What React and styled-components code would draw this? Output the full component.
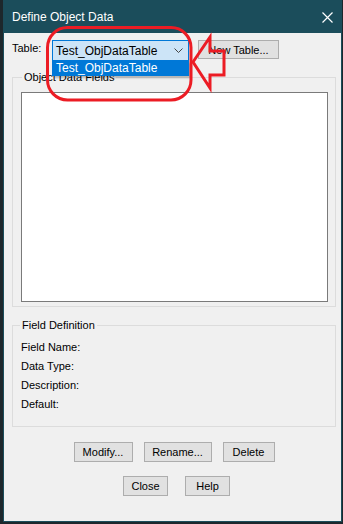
import React from 'react';
import styled, { createGlobalStyle } from 'styled-components';

const GlobalStyle = createGlobalStyle`
  html, body {
    margin: 0;
    padding: 0;
    background: #1d272c;
  }
  body {
    font-family: "Liberation Sans", Arial, sans-serif;
  }
`;

// Outer desktop area and the dialog window
const Screen = styled.div`
  position: relative;
  width: 343px;
  height: 524px;
  padding-left: 3px;
  box-sizing: border-box;
  background: #1d272c;
`;

const Window = styled.div`
  width: 339px;
  height: 522px;
  box-sizing: border-box;
  border: 1px solid #1b4d5b;
  background: #1b4d5b;
  display: flex;
  flex-direction: column;
`;

const TitleBar = styled.div`
  height: 32px;
  flex: none;
  display: flex;
  align-items: center;
  justify-content: space-between;
  padding: 0 8px;
  color: #fff;
  font-size: 12px;
`;

const Body = styled.div`
  flex: 1;
  background: #f0f0f0;
  padding: 7px 5px 0 8px;
  font-size: 11px;
  color: #000;
`;

// Top row: label, combo box, button
const TopRow = styled.div`
  display: flex;
  align-items: flex-start;
`;

const RowLabel = styled.div`
  width: 40px;
  margin-top: 2px;
  line-height: 13px;
`;

const ComboWrap = styled.div`
  position: relative;
  width: 137px;
  margin-right: 9px;
`;

const Combo = styled.div`
  height: 21px;
  box-sizing: border-box;
  border: 1px solid #0078d7;
  background: #cce4f7;
  display: flex;
  align-items: center;
  justify-content: space-between;
  padding: 0 5px 0 3px;
  font-size: 12px;
`;

const DropList = styled.div`
  position: absolute;
  top: 21px;
  left: 0;
  width: 137px;
  height: 15px;
  box-sizing: border-box;
  background: #0078d7;
  color: #fff;
  padding-left: 4px;
  line-height: 15px;
  font-size: 12px;
  box-shadow: 2px 2px 2px rgba(0, 0, 0, 0.25);
  z-index: 2;
`;

const Button = styled.button`
  width: ${p => p.w}px;
  height: ${p => p.h || 20}px;
  box-sizing: border-box;
  border: 1px solid #adadad;
  background: #e1e1e1;
  font-family: "Liberation Sans", Arial, sans-serif;
  font-size: 11px;
  color: #000;
  padding: 0;
`;

// Group boxes
const Group = styled.div`
  position: relative;
  width: 324px;
  height: ${p => p.h}px;
  box-sizing: border-box;
  margin-top: ${p => p.mt}px;
  border: 1px solid #dcdcdc;
  padding: ${p => p.pad};
`;

const Caption = styled.div`
  position: absolute;
  top: -7px;
  left: ${p => p.left}px;
  padding: 0 2px;
  background: #f0f0f0;
  line-height: 13px;
  white-space: nowrap;
`;

const ListBox = styled.div`
  height: 210px;
  box-sizing: border-box;
  border: 1px solid #7a7a7a;
  background: #fff;
`;

const FieldLabel = styled.div`
  line-height: 19px;
`;

const ButtonRow = styled.div`
  width: 324px;
  display: flex;
  justify-content: center;
  gap: ${p => p.gap}px;
  margin-top: ${p => p.mt}px;
  padding-left: ${p => p.pl || 0}px;
  box-sizing: border-box;
`;

const Annotation = styled.svg`
  position: absolute;
  top: 0;
  left: 0;
  pointer-events: none;
  z-index: 5;
`;

const App = () => {
  return (
    <Screen>
      <GlobalStyle />
      <Window>
        <TitleBar>
          <span>Define Object Data</span>
          <svg width="11" height="11" viewBox="0 0 11 11">
            <path d="M0.5 0.5 L10.5 10.5 M10.5 0.5 L0.5 10.5" stroke="#fff" strokeWidth="1.2" />
          </svg>
        </TitleBar>
        <Body>
          <TopRow>
            <RowLabel>Table:</RowLabel>
            <ComboWrap>
              <Combo>
                <span>Test_ObjDataTable</span>
                <svg width="9" height="5" viewBox="0 0 9 5">
                  <polyline points="0.5,0.5 4.5,4.5 8.5,0.5" fill="none" stroke="#444" strokeWidth="1" />
                </svg>
              </Combo>
              <DropList>Test_ObjDataTable</DropList>
            </ComboWrap>
            <Button w={81} h={19}>New Table...</Button>
          </TopRow>

          <Group h={230} mt={16} pad="14px 7px 4px 8px">
            <Caption left={9}>Object Data Fields</Caption>
            <ListBox />
          </Group>

          <Group h={102} mt={18} pad="12px 8px 12px 8px">
            <Caption left={7}>Field Definition</Caption>
            <FieldLabel>Field Name:</FieldLabel>
            <FieldLabel>Data Type:</FieldLabel>
            <FieldLabel>Description:</FieldLabel>
            <FieldLabel>Default:</FieldLabel>
          </Group>

          <ButtonRow gap={11} mt={15}>
            <Button w={59}>Modify...</Button>
            <Button w={68}>Rename...</Button>
            <Button w={52}>Delete</Button>
          </ButtonRow>
          <ButtonRow gap={17} mt={14} pl={5}>
            <Button w={45}>Close</Button>
            <Button w={45}>Help</Button>
          </ButtonRow>
        </Body>
      </Window>

      <Annotation width="343" height="524" viewBox="0 0 343 524">
        <rect x="47.5" y="27.5" width="143.5" height="72.5" rx="20" fill="none" stroke="#ec1c24" strokeWidth="3" />
        <polygon
          points="193,62 210,37 210,51 224,51 224,75 210,75 210,88"
          fill="none"
          stroke="#ec1c24"
          strokeWidth="3"
          strokeLinejoin="miter"
        />
      </Annotation>
    </Screen>
  );
};

export default App;
